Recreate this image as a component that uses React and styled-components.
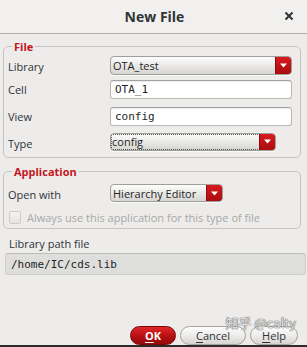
import React from "react"
import styled, { createGlobalStyle } from "styled-components"

const GlobalStyle = createGlobalStyle`
  html, body {
    margin: 0;
    padding: 0;
    background: #edeceb;
  }
  body {
    font-family: "Open Sans", "Noto Sans", sans-serif;
    color: #2e3436;
  }
`

const Window = styled.div`
  position: relative;
  width: 307px;
  height: 347px;
  box-sizing: border-box;
  display: flex;
  flex-direction: column;
  background: #edeceb;
  border-bottom: 2px solid #2b2b2b;
  overflow: hidden;
`

const TitleBar = styled.div`
  height: 34px;
  flex: none;
  box-sizing: border-box;
  display: flex;
  align-items: center;
  justify-content: center;
  position: relative;
  background: #f1f0ef;
  border-bottom: 1px solid #b3b2af;
`

const Title = styled.span`
  font-size: 14px;
  font-weight: 700;
  color: #2e3436;
  margin-left: 2px;
`

const CloseButton = styled.span`
  position: absolute;
  right: 13px;
  top: 11px;
  width: 10px;
  height: 10px;
  display: flex;
`

const Body = styled.div`
  flex: 1;
  display: flex;
  flex-direction: column;
  padding: 5px 6px 0 3px;
`

const Group = styled.fieldset`
  margin: 0;
  padding: ${(p) => p.pad};
  border: 1px solid #c4c3c0;
  border-radius: 5px;
  min-width: 0;
  & + & {
    margin-top: 6px;
  }
`

const Legend = styled.legend`
  margin-left: 4px;
  padding: 0 2px;
  font-size: 11px;
  font-weight: 700;
  color: #c4151c;
  line-height: 15px;
`

const Row = styled.div`
  display: grid;
  grid-template-columns: 102px ${(p) => p.field || "182px"};
  align-items: center;
  height: ${(p) => p.h || 19}px;
  margin-top: ${(p) => p.mt || 0}px;
`

const Label = styled.span`
  font-size: 11px;
  color: #2e3436;
  padding-top: ${(p) => p.down || 0}px;
`

const Combo = styled.div`
  height: ${(p) => p.h || 19}px;
  box-sizing: border-box;
  display: flex;
  align-items: stretch;
  border: 1px solid #9e9e9b;
  border-radius: 4px;
  background: linear-gradient(#fdfdfd, #e6e5e3 60%, #d6d5d2);
  overflow: hidden;
  box-shadow: 0 1px 0 rgba(255, 255, 255, 0.7);
`

const ComboText = styled.span`
  flex: 1;
  display: flex;
  align-items: center;
  padding-left: 2px;
  font-size: 11px;
  color: #1f1f1f;
  white-space: nowrap;
  ${(p) =>
    p.focused &&
    `
    margin: 1px 0 1px 1px;
    padding-left: 0;
    outline: 1px dotted #555;
  `}
`

const ComboArrow = styled.span`
  width: 15px;
  flex: none;
  display: flex;
  align-items: center;
  justify-content: center;
  background: linear-gradient(#d8191f, #a80d10);
  border-left: 1px solid #8c0a0c;
`

const Input = styled.div`
  height: 19px;
  box-sizing: border-box;
  display: flex;
  align-items: center;
  padding-left: 4px;
  background: #fff;
  border: 1px solid #b9b8b5;
  border-top-color: #a3a29f;
  border-radius: 3px;
  box-shadow: inset 0 1px 1px rgba(0, 0, 0, 0.08);
  font-family: "DejaVu Sans Mono", monospace;
  font-size: 11px;
  color: #1f1f1f;
`

const CheckRow = styled.label`
  display: flex;
  align-items: center;
  gap: 6px;
  margin-top: 8px;
  font-size: 11px;
  color: #a8a8a6;
  white-space: nowrap;
`

const CheckBox = styled.span`
  width: 10px;
  height: 11px;
  flex: none;
  border: 1px solid #cdcccb;
  border-radius: 2px;
  background: linear-gradient(#f3f3f2, #e4e3e1);
  margin-left: 1px;
`

const PathLabel = styled.div`
  margin: 6px 0 0 6px;
  font-size: 11px;
  line-height: 17px;
`

const PathField = styled.div`
  margin: 1px -5px 0 2px;
  height: 22px;
  box-sizing: border-box;
  display: flex;
  align-items: center;
  padding-left: 5px;
  background: #dededd;
  border: 1px solid #d0cfcd;
  border-top-color: #bcbbb8;
  border-radius: 3px;
  font-family: "DejaVu Sans Mono", monospace;
  font-size: 11px;
  color: #1f1f1f;
`

const Footer = styled.div`
  margin-top: auto;
  display: flex;
  justify-content: flex-end;
  gap: 4px;
  padding: 0 3px 0 0;
`

const Button = styled.button`
  width: ${(p) => p.w}px;
  height: 19px;
  padding: 0;
  border-radius: 10px;
  font-family: "Open Sans", "Noto Sans", sans-serif;
  font-size: 11px;
  line-height: 17px;
  border: 1px solid ${(p) => (p.primary ? "#7a0608" : "#a4a3a0")};
  background: ${(p) =>
    p.primary
      ? "linear-gradient(#e0262b, #b50f12 55%, #960a0c)"
      : "linear-gradient(#fefefe, #ebeae8 55%, #d6d5d2)"};
  color: ${(p) => (p.primary ? "#fff" : "#2e3436")};
  font-weight: ${(p) => (p.primary ? 700 : 400)};
  & u {
    text-underline-offset: 2px;
  }
`

const Watermark = styled.div`
  position: absolute;
  right: 11px;
  bottom: 14px;
  font-family: "Noto Sans CJK SC", "Open Sans", sans-serif;
  font-size: 13px;
  line-height: 16px;
  color: rgba(255, 255, 255, 0.8);
  text-shadow: 0 0 1px #6f6f6f, 0 0 1px #6f6f6f, 0 0 1px #6f6f6f;
  pointer-events: none;
`

const Arrow = () => (
  <svg width="7" height="5" viewBox="0 0 7 5">
    <path d="M0 0.5h7L3.5 4.5z" fill="#fff" />
  </svg>
)

const CloseIcon = () => (
  <svg width="10" height="10" viewBox="0 0 10 10">
    <path d="M1.5 1.5l7 7M8.5 1.5l-7 7" stroke="#2e3436" strokeWidth="2" />
  </svg>
)

export default function App() {
  return (
    <>
      <GlobalStyle />
      <Window>
        <TitleBar>
          <Title>New File</Title>
          <CloseButton>
            <CloseIcon />
          </CloseButton>
        </TitleBar>
        <Body>
          <Group pad="2px 9px 6px 4px">
            <Legend>File</Legend>
            <Row>
              <Label down={1}>Library</Label>
              <Combo>
                <ComboText>OTA_test</ComboText>
                <ComboArrow>
                  <Arrow />
                </ComboArrow>
              </Combo>
            </Row>
            <Row mt={5}>
              <Label>Cell</Label>
              <Input>OTA_1</Input>
            </Row>
            <Row mt={8}>
              <Label>View</Label>
              <Input>config</Input>
            </Row>
            <Row mt={6} field="166px">
              <Label down={4}>Type</Label>
              <Combo h={18}>
                <ComboText focused>config</ComboText>
                <ComboArrow>
                  <Arrow />
                </ComboArrow>
              </Combo>
            </Row>
          </Group>
          <Group pad="2px 9px 3px 4px">
            <Legend>Application</Legend>
            <Row field="113px" h={18} mt={3}>
              <Label down={3}>Open with</Label>
              <Combo h={18}>
                <ComboText>Hierarchy Editor</ComboText>
                <ComboArrow>
                  <Arrow />
                </ComboArrow>
              </Combo>
            </Row>
            <CheckRow>
              <CheckBox />
              Always use this application for this type of file
            </CheckRow>
          </Group>
          <PathLabel>Library path file</PathLabel>
          <PathField>/home/IC/cds.lib</PathField>
          <Footer>
            <Button primary w={46}>
              <u>O</u>K
            </Button>
            <Button w={66}>
              <u>C</u>ancel
            </Button>
            <Button w={48}>
              <u>H</u>elp
            </Button>
          </Footer>
        </Body>
        <Watermark>知乎 @calty</Watermark>
      </Window>
    </>
  )
}
